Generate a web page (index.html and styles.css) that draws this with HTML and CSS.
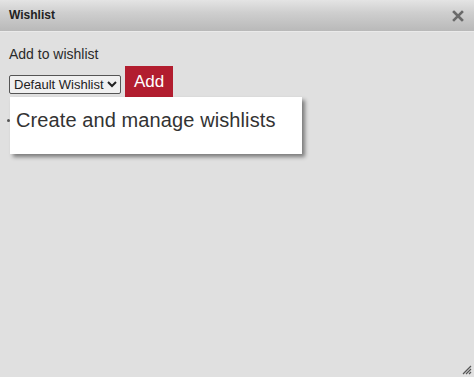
FILE: index.html
```html
<!DOCTYPE html>
<html lang="en">
<head>
    <meta charset="UTF-8">
    <title>Wishlist</title>
    <link rel="stylesheet" href="styles.css">
</head>
<body>
    <div class="dialog">
        <div class="dialog-title">
            <span class="title-text">Wishlist</span>
            <span class="close-btn">
                <svg width="12" height="12" viewBox="0 0 12 12">
                    <path d="M2 2L10 10M10 2L2 10" stroke="#6a6a6a" stroke-width="2.6" stroke-linecap="square"></path>
                </svg>
            </span>
        </div>
        <div class="dialog-body">
            <p class="label">Add to wishlist</p>
            <div class="add-row">
                <select class="wishlist-select">
                    <option>Default Wishlist</option>
                </select>
                <button class="add-btn">Add</button>
            </div>
            <div class="manage-row">
                <span class="bullet"></span>
                <div class="tooltip">Create and manage wishlists</div>
            </div>
        </div>
        <div class="resize-grip">
            <svg width="12" height="12" viewBox="0 0 12 12">
                <path d="M11 3L3 11M11 6L6 11M11 9L9 11" stroke="#555" stroke-width="1.2"></path>
            </svg>
        </div>
    </div>
</body>
</html>
```

FILE: styles.css
```css
* {
    margin: 0;
    padding: 0;
    box-sizing: border-box;
}

body {
    font-family: 'Liberation Sans', Arial, sans-serif;
    background-color: #dfdfdf;
    width: 474px;
    height: 377px;
    overflow: hidden;
}

.dialog {
    position: relative;
    height: 377px;
    display: flex;
    flex-direction: column;
    background-color: #e0e0e0;
}

.dialog-title {
    height: 32px;
    display: flex;
    align-items: center;
    justify-content: space-between;
    padding: 0 10px 2px 9px;
    background: linear-gradient(to bottom, #e4e4e4 0%, #cfcfcf 40%, #b9b9b9 100%);
    border-bottom: 1px solid #eaeaea;
}

.title-text {
    font-size: 12px;
    font-weight: bold;
    color: #222;
}

.close-btn {
    display: flex;
    margin-top: 2px;
}

.dialog-body {
    padding: 14px 9px;
}

.label {
    font-size: 14px;
    color: #2a2a2a;
    margin-bottom: 4px;
}

.add-row {
    display: flex;
    align-items: flex-end;
    gap: 4px;
}

.wishlist-select {
    font-family: 'Liberation Sans', Arial, sans-serif;
    font-size: 13px;
    color: #222;
    width: 112px;
    height: 19px;
    margin-bottom: 3px;
    background: #f0f0f0;
    border: 1px solid #555;
    border-radius: 2px;
}

.add-btn {
    font-family: 'Liberation Sans', Arial, sans-serif;
    font-size: 17px;
    color: #fff;
    background-color: #b21d2f;
    border: none;
    width: 48px;
    height: 31px;
}

.manage-row {
    display: flex;
    align-items: center;
}

.bullet {
    width: 3px;
    height: 3px;
    border-radius: 50%;
    background: #555;
    margin-left: -2px;
    margin-bottom: 10px;
}

.tooltip {
    width: 292px;
    height: 57px;
    background-color: #fff;
    font-size: 20px;
    letter-spacing: 0.1px;
    color: #333;
    padding: 12px 6px;
    box-shadow: 3px 3px 4px rgba(0, 0, 0, 0.45);
}

.resize-grip {
    position: absolute;
    right: 2px;
    bottom: 2px;
    display: flex;
}
```
